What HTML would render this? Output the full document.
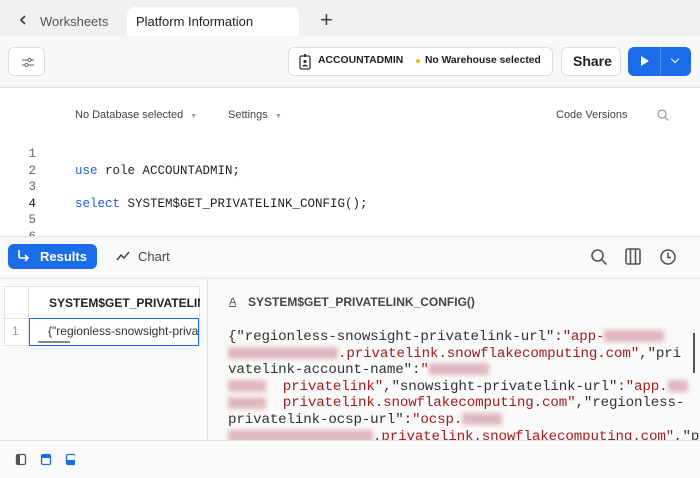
<!DOCTYPE html>
<html><head><meta charset="utf-8"><style>
*{box-sizing:border-box;margin:0;padding:0}
body{width:700px;height:478px;overflow:hidden;font-family:"Liberation Sans",sans-serif;background:#fff;position:relative;color:#1e1e1e}
.abs{position:absolute}
.tabbar{left:0;top:0;width:700px;height:36px;background:#f1f1f1}
.toolbar{left:0;top:36px;width:700px;height:52px;background:#f8f8f8;border-bottom:1px solid #e4e4e4}
.btn{position:absolute;background:#fff;border:1px solid #dedede;border-radius:6px}
.code{font-family:"Liberation Mono",monospace;font-size:12.5px}
.kw{color:#1f5bd6}
.res{left:0;top:236px;width:700px;height:205px;background:#fafafa;border-top:1px solid #e4e4e4}
.mono{font-family:"Liberation Mono",monospace;font-size:14.2px;letter-spacing:-0.15px;color:#333;white-space:pre}
.r{color:#a31c1c}
.bl{display:inline-block;height:12px;background:#d8a8ae;filter:blur(2.5px);vertical-align:middle;opacity:.8}
</style></head><body>
<div class="abs tabbar"></div>
<svg class="abs" style="left:19px;top:15px" width="8" height="10"><path d="M6 1L2 5l4 4" fill="none" stroke="#444" stroke-width="1.8"/></svg>
<div class="abs" style="left:40px;top:14px;font-size:13px;color:#555">Worksheets</div>
<div class="abs" style="left:127px;top:7px;width:172px;height:30px;background:#fff;border-radius:8px 8px 0 0"></div>
<div class="abs" style="left:136px;top:14px;font-size:13px;color:#222">Platform Information</div>
<div class="abs" style="left:320px;top:7px;font-size:22px;color:#444;font-weight:300">+</div>
<div class="abs toolbar"></div>
<div class="btn" style="left:8px;top:47px;width:37px;height:29px"><svg width="37" height="29"><path d="M13 12h6M22 12h3M13 17h3M19 17h6" stroke="#666" stroke-width="1"/><circle cx="20.5" cy="12" r="1.6" fill="none" stroke="#666"/><circle cx="17.5" cy="17" r="1.6" fill="none" stroke="#666"/></svg></div>
<div class="btn" style="left:288px;top:47px;width:265px;height:29px"></div>
<svg class="abs" style="left:299px;top:53px" width="12" height="17"><rect x="1" y="3" width="10" height="13" rx="1.5" fill="none" stroke="#333" stroke-width="1.3"/><rect x="5" y="1" width="2" height="3" fill="#333"/><circle cx="6" cy="8.5" r="1.6" fill="#333"/><path d="M3 13.5c1-2.5 5-2.5 6 0z" fill="#333"/></svg>
<div class="abs" style="left:318px;top:55px;font-size:10.4px;font-weight:bold;color:#222">ACCOUNTADMIN</div>
<div class="abs" style="left:416px;top:59px;width:4px;height:4px;border-radius:50%;background:#f5b400"></div>
<div class="abs" style="left:425px;top:55px;font-size:10.3px;font-weight:bold;color:#222">No Warehouse selected</div>
<div class="btn" style="left:561px;top:47px;width:60px;height:29px"></div>
<div class="abs" style="left:573px;top:53px;font-size:14px;font-weight:bold;color:#222">Share</div>
<div class="abs" style="left:628px;top:47px;width:63px;height:29px;background:#1a6ce7;border-radius:6px"></div>
<div class="abs" style="left:660px;top:47px;width:1px;height:29px;background:#4d8df0"></div>
<div class="abs" style="left:641px;top:56px;width:0;height:0;border-left:8px solid #fff;border-top:5.5px solid transparent;border-bottom:5.5px solid transparent"></div>
<div class="abs" style="left:672px;top:56px;width:6px;height:6px;border-right:1.6px solid #fff;border-bottom:1.6px solid #fff;transform:rotate(45deg)"></div>
<div class="abs" style="left:75px;top:109px;font-size:11px;color:#444">No Database selected <span style="font-size:7px;color:#999;margin-left:4px">▼</span></div>
<div class="abs" style="left:228px;top:109px;font-size:11px;color:#444">Settings <span style="font-size:7px;color:#999;margin-left:4px">▼</span></div>
<div class="abs" style="left:556px;top:109px;font-size:11px;color:#444">Code Versions</div>
<svg class="abs" style="left:656px;top:108px" width="14" height="14"><circle cx="6" cy="6" r="4" fill="none" stroke="#999" stroke-width="1.2"/><path d="M9 9l3.5 3.5" stroke="#999" stroke-width="1.2"/></svg>
<div class="abs code" style="left:28px;top:146px;line-height:16.6px;color:#666;text-align:right;width:8px">1<br>2<br>3<br><span style="color:#222">4</span><br>5<br>6</div>
<div class="abs code" style="left:75px;top:162.6px;line-height:16.6px;white-space:pre;color:#222"><span class="kw">use</span> role ACCOUNTADMIN;

<span class="kw">select</span> SYSTEM$GET_PRIVATELINK_CONFIG();</div>
<div class="abs res"></div>
<div class="abs" style="left:8px;top:244px;width:89px;height:25px;background:#1a6ce7;border-radius:6px"></div>
<svg class="abs" style="left:16px;top:249px" width="14" height="14"><path d="M3 1v6q0 2 2 2h7M9 6l3 3-3 3" fill="none" stroke="#fff" stroke-width="1.6"/></svg>
<div class="abs" style="left:40px;top:249px;font-size:13px;font-weight:bold;color:#fff">Results</div>
<svg class="abs" style="left:116px;top:250px" width="14" height="12"><path d="M1 10l4-5 3 3 5-6" fill="none" stroke="#444" stroke-width="1.5"/></svg>
<div class="abs" style="left:138px;top:249px;font-size:13px;color:#444">Chart</div>
<svg class="abs" style="left:590px;top:248px" width="18" height="18"><circle cx="7.5" cy="7.5" r="5.5" fill="none" stroke="#555" stroke-width="1.6"/><path d="M11.5 11.5l5 5" stroke="#555" stroke-width="1.6"/></svg>
<svg class="abs" style="left:625px;top:248px" width="16" height="18"><rect x="1" y="1" width="14" height="15" rx="1.5" fill="none" stroke="#555" stroke-width="1.6"/><path d="M5.5 1v15M10.5 1v15" stroke="#555" stroke-width="1.6"/></svg>
<svg class="abs" style="left:659px;top:248px" width="18" height="18"><circle cx="9" cy="9" r="7" fill="none" stroke="#555" stroke-width="1.6"/><path d="M9 4.5v5h3" fill="none" stroke="#555" stroke-width="1.6"/></svg>
<div class="abs" style="left:0;top:277px;width:700px;height:2px;background:#ececec"></div>
<div class="abs" style="left:207px;top:279px;width:1px;height:162px;background:#e2e2e2"></div>
<div class="abs" style="left:4px;top:286px;width:196px;height:60px;background:#fff;border:1px solid #e2e2e2"></div>
<div class="abs" style="left:28px;top:286px;width:1px;height:60px;background:#e2e2e2"></div>
<div class="abs" style="left:4px;top:318px;width:196px;height:1px;background:#e2e2e2"></div>
<div class="abs" style="left:49px;top:296px;font-size:12px;font-weight:bold;color:#222;width:151px;overflow:hidden;white-space:nowrap">SYSTEM$GET_PRIVATELINK</div>
<div class="abs" style="left:12px;top:324px;font-size:12px;color:#999">1</div>
<div class="abs" style="left:29px;top:318px;width:170px;height:28px;border:1.5px solid #1a6ce7;background:#fff"></div>
<div class="abs" style="left:48px;top:324px;font-size:12px;color:#333;width:150px;overflow:hidden;white-space:nowrap">{"regionless-snowsight-privatelink</div>
<div class="abs" style="left:38px;top:341px;width:32px;height:2px;background:#888"></div>
<div class="abs" style="left:229px;top:296px;font-size:11px;color:#555;text-decoration:underline">A</div>
<div class="abs" style="left:248px;top:295px;font-size:12px;font-weight:bold;color:#444">SYSTEM$GET_PRIVATELINK_CONFIG()</div>
<div class="abs" style="left:214px;top:325px;width:486px;height:115px;overflow:hidden">
<div class="mono" style="position:absolute;left:14px;top:4px;line-height:16.6px">{"regionless-snowsight-privatelink-url":<span class="r">"app-</span><span class="bl" style="width:60px"></span>
<span class="bl" style="width:110px"></span><span class="r">.privatelink.snowflakecomputing.com"</span>,"pri
vatelink-account-name":<span class="r">"</span><span class="bl" style="width:60px"></span>
<span class="bl" style="width:38px"></span>  <span class="r">privatelink"</span>,"snowsight-privatelink-url":<span class="r">"app.</span><span class="bl" style="width:20px"></span>
<span class="bl" style="width:38px"></span>  <span class="r">privatelink.snowflakecomputing.com"</span>,"regionless-
privatelink-ocsp-url":<span class="r">"ocsp.</span><span class="bl" style="width:40px"></span>
<span class="bl" style="width:145px"></span><span class="r">.privatelink.snowflakecomputing.com"</span>,"pri</div>
</div>
<div class="abs" style="left:693px;top:333px;width:2px;height:40px;background:#555"></div>
<div class="abs" style="left:0;top:440px;width:700px;height:38px;background:#fafafa;border-top:1px solid #e4e4e4"></div>
<svg class="abs" style="left:15px;top:453px" width="60" height="14"><rect x="1.5" y="1.5" width="9" height="10" rx="1.5" fill="none" stroke="#555" stroke-width="1.3"/><rect x="1.5" y="1.5" width="3.5" height="10" fill="#555"/><rect x="26.5" y="1.5" width="9" height="10" rx="1.5" fill="none" stroke="#1a6ce7" stroke-width="1.3"/><rect x="26.5" y="1.5" width="9" height="3.5" fill="#1a6ce7"/><rect x="51.5" y="1.5" width="9" height="10" rx="1.5" fill="none" stroke="#1a6ce7" stroke-width="1.3"/><rect x="51.5" y="7" width="9" height="4.5" fill="#1a6ce7"/></svg>
</body></html>
